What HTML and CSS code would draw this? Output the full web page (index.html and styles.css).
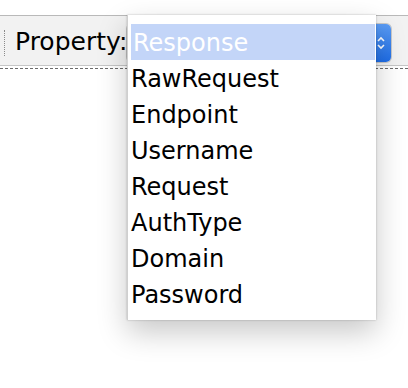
FILE: index.html
```html
<!DOCTYPE html>
<html>
<head>
<meta charset="utf-8">
<link rel="stylesheet" href="styles.css">
</head>
<body>
<div class="top-space"></div>
<div class="toolbar">
  <div class="grip"></div>
  <span class="label">Property:</span>
  <div class="combo">
    <span class="combo-value">Response</span>
    <span class="combo-btn">
      <svg width="10" height="18" viewBox="0 0 10 18"><path d="M2 7 L5 4 L8 7 M2 11 L5 14 L8 11" fill="none" stroke="#fff" stroke-width="1.6"/></svg>
    </span>
  </div>
</div>
<div class="rule"></div>
<ul class="popup">
  <li class="item selected">Response</li>
  <li class="item">RawRequest</li>
  <li class="item">Endpoint</li>
  <li class="item">Username</li>
  <li class="item">Request</li>
  <li class="item">AuthType</li>
  <li class="item">Domain</li>
  <li class="item">Password</li>
</ul>
</body>
</html>
```
FILE: styles.css
```css
html, body {
  margin: 0;
  padding: 0;
  background: #ffffff;
  font-family: "DejaVu Sans", "Liberation Sans", sans-serif;
  font-size: 24px;
  color: #000;
}
.top-space {
  height: 15px;
}
.toolbar {
  height: 49px;
  border-top: 1px solid #b9b9b9;
  border-bottom: 1px solid #c6c6c6;
  background: #f2f2f2;
  display: flex;
  align-items: center;
  position: relative;
}
.grip {
  width: 0;
  height: 26px;
  margin-left: 4px;
  border-left: 1px dotted #8a8a8a;
  margin-top: 4px;
}
.label {
  margin-left: 10px;
  font-size: 25px;
  line-height: 28px;
  margin-top: 2px;
}
.combo {
  position: absolute;
  left: 127px;
  top: 8px;
  width: 264px;
  height: 38px;
  background: #fff;
  border-radius: 5px;
  display: flex;
  align-items: center;
  justify-content: space-between;
  box-shadow: 0 0 0 1px #c8c8c8;
}
.combo-value {
  padding-left: 6px;
}
.combo-btn {
  width: 20px;
  height: 38px;
  background: linear-gradient(#5a9cf5, #1f6ee8);
  border-radius: 0 5px 5px 0;
  display: flex;
  align-items: center;
  justify-content: center;
}
.rule {
  height: 1px;
  margin-top: 2px;
  border-top: 1px dashed #6a6a6a;
}
.popup {
  position: absolute;
  left: 127px;
  top: 15px;
  width: 249px;
  margin: 0;
  padding: 9px 1px 8px 3px;
  box-sizing: border-box;
  height: 305px;
  list-style: none;
  background: #fff;
  border-left: 1px solid #cfcfcf;
  box-shadow: 0 12px 28px rgba(0, 0, 0, 0.22), 0 0 2px rgba(0, 0, 0, 0.25);
}
.item {
  height: 36px;
  line-height: 34px;
  padding-top: 2px;
  padding-left: 0;
  box-sizing: border-box;
  color: #000;
}
.item.selected {
  background: #c3d5f8;
  color: #ffffff;
  padding-left: 2px;
}
```
